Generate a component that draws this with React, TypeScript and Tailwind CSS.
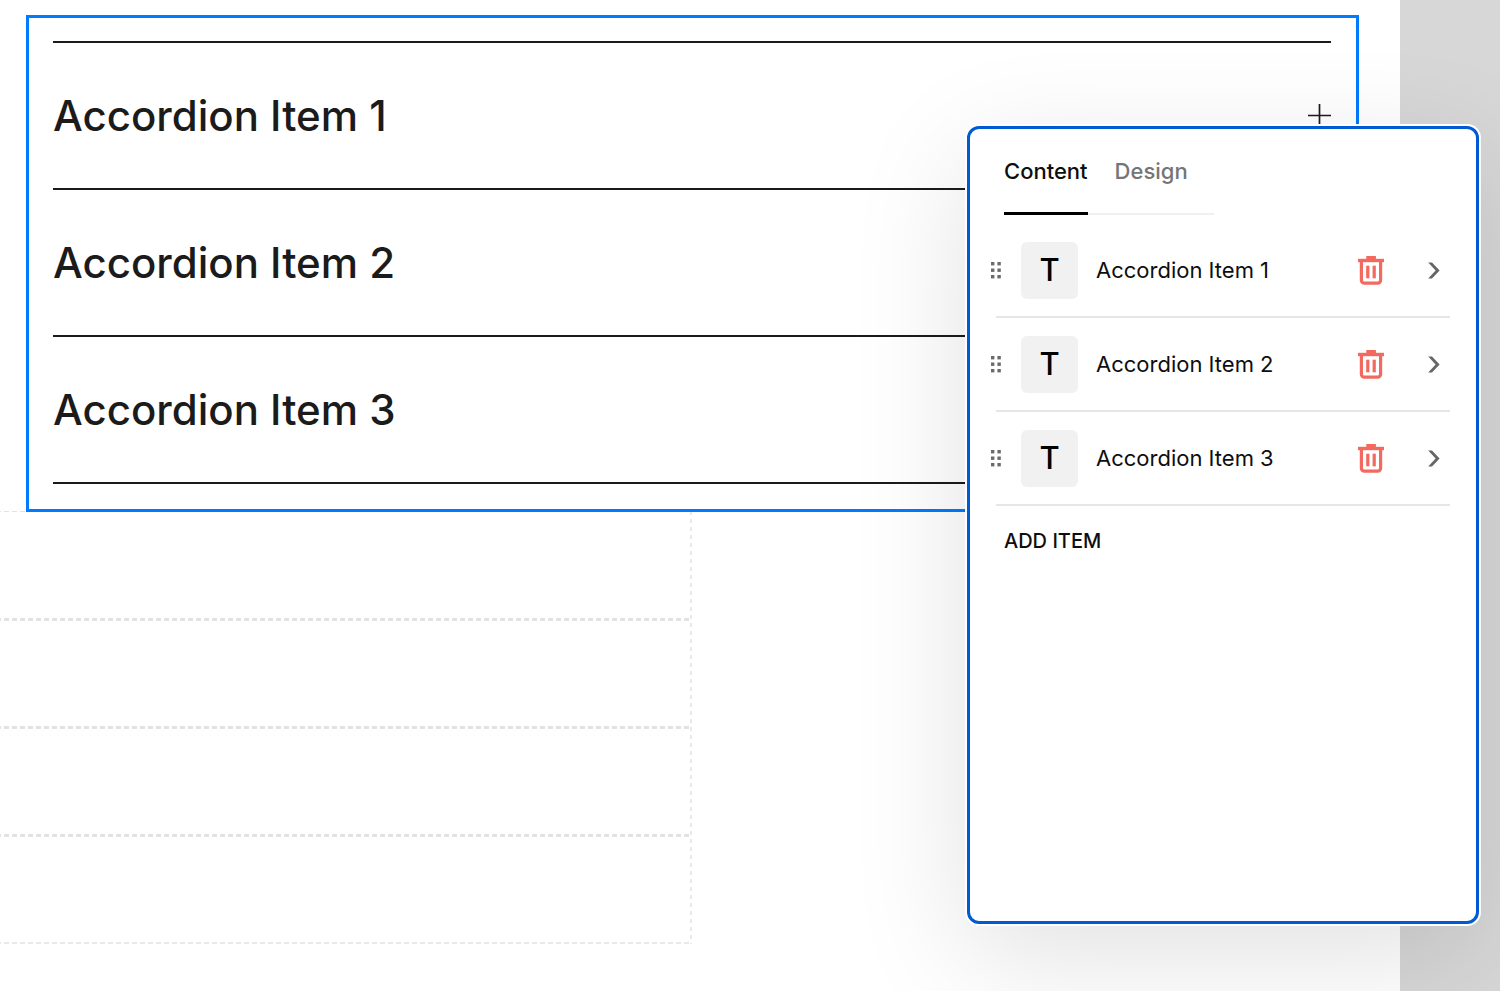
import { useState } from "react";

interface AccordionEntry {
  id: number;
  title: string;
}

const ITEMS: AccordionEntry[] = [
  { id: 1, title: "Accordion Item 1" },
  { id: 2, title: "Accordion Item 2" },
  { id: 3, title: "Accordion Item 3" },
];

const TABS = ["Content", "Design"];

function PlusIcon() {
  return (
    <svg width="23" height="23" viewBox="0 0 23 23" stroke="currentColor" strokeWidth="1.7" aria-hidden="true">
      <path d="M11.5 0v23M0 11.5h23" />
    </svg>
  );
}

function DragIcon() {
  return (
    <svg width="11" height="17" viewBox="0 0 11 17" fill="#6b6b6b" aria-hidden="true">
      {[0, 6.5, 13].map((y) => (
        <g key={y}>
          <rect x="0" y={y} width="3.4" height="3.4" />
          <rect x="6.4" y={y} width="3.4" height="3.4" />
        </g>
      ))}
    </svg>
  );
}

function TrashIcon() {
  return (
    <svg width="26" height="29" viewBox="0 0 26 29" fill="#f2695f" aria-hidden="true">
      <rect x="8.3" y="0" width="9.6" height="3.4" />
      <rect x="0" y="2.8" width="26" height="3.4" />
      <path
        d="M3.4 5v19.2a3 3 0 0 0 3 3h13.2a3 3 0 0 0 3-3V5"
        fill="none"
        stroke="#f2695f"
        strokeWidth="3.2"
      />
      <rect x="8.2" y="9.7" width="3.2" height="12.6" />
      <rect x="14.6" y="9.7" width="3.2" height="12.6" />
    </svg>
  );
}

function ChevronIcon() {
  return (
    <svg width="12" height="17" viewBox="0 0 12 17" fill="#666" aria-hidden="true">
      <path d="M0.2 0.4h3.8l7.6 8.1-7.6 8.1H0.2l7.4-8.1z" />
    </svg>
  );
}

function AccordionBlock() {
  return (
    <section className="relative z-10 mt-[15px] mr-[41px] ml-[26px] border-3 border-[#007aff] pt-[23px] pr-[25px] pb-[25px] pl-6">
      <ul className="border-t-2 border-[#1b1b1b]">
        {ITEMS.map((item) => (
          <li key={item.id} className="border-b-2 border-[#1b1b1b]">
            <button className="flex h-[145px] w-full items-center justify-between text-left text-[#1b1b1b]">
              <span className="text-[42px] font-medium">{item.title}</span>
              <PlusIcon />
            </button>
          </li>
        ))}
      </ul>
    </section>
  );
}

// Drop zones of the page grid below the selected block
function GridGuides() {
  return (
    <div className="-mt-px flex w-[692px]">
      <div className="flex-1">
        <div className="h-px bg-[repeating-linear-gradient(to_right,#e2e2e2_0_1px,transparent_1px_4px,#e2e2e2_4px_8px)]" />
        <div className="h-[106px]" />
        {[1, 2, 3].map((row) => (
          <div key={row}>
            <div className="h-[3px] bg-[repeating-linear-gradient(to_right,#e2e2e2_0_1px,transparent_1px_4px,#e2e2e2_4px_8px)]" />
            <div className="h-[105px]" />
          </div>
        ))}
        <div className="h-[2px] bg-[repeating-linear-gradient(to_right,#e8e8e8_0_1px,transparent_1px_4px,#e8e8e8_4px_8px)]" />
      </div>
      <div className="w-[2px] bg-[repeating-linear-gradient(to_bottom,#e8e8e8_0_4px,transparent_4px_8px)]" />
    </div>
  );
}

function EditorPanel() {
  const [tab, setTab] = useState("Content");

  return (
    <div className="absolute top-[126px] right-[21px] z-20 min-h-[798px] w-[512px] rounded-xl border-3 border-[#005bd3] bg-white pr-[26px] pl-[21px] shadow-[0_0_0_2px_#fff,0_32px_120px_rgba(0,0,0,0.12)]">
      <div role="tablist" className="ml-[13px] flex h-[86px] w-[210px] items-end gap-[27px] border-b-2 border-[#f0f0f0]">
        {TABS.map((name) => (
          <button
            key={name}
            role="tab"
            aria-selected={tab === name}
            onClick={() => setTab(name)}
            className={`-mb-[2px] h-[72px] border-b-3 pb-3 text-[22px] font-medium ${
              tab === name ? "border-black text-[#0e0e0e]" : "border-transparent text-[#757575]"
            }`}
          >
            {name}
          </button>
        ))}
      </div>

      <ul className="mt-[9px]">
        {ITEMS.map((item) => (
          <li key={item.id}>
            <div className="flex h-[92px] items-center pr-[10px]">
              <button aria-label={`Move ${item.title}`} className="cursor-grab">
                <DragIcon />
              </button>
              <span className="ml-[19px] flex size-[57px] items-center justify-center rounded-md bg-[#f1f1f1] text-[31px] font-medium text-black">
                T
              </span>
              <span className="ml-[18px] flex-1 text-[22px] text-[#0e0e0e]">{item.title}</span>
              <button aria-label={`Delete ${item.title}`}>
                <TrashIcon />
              </button>
              <button aria-label={`Edit ${item.title}`} className="ml-11">
                <ChevronIcon />
              </button>
            </div>
            <div className="ml-[5px] h-[2px] bg-[#e6e6e6]" />
          </li>
        ))}
      </ul>

      <button className="mt-5 ml-[13px] text-[20px] font-medium text-[#0e0e0e]">ADD ITEM</button>
    </div>
  );
}

export default function App() {
  return (
    <div className="relative flex min-h-screen overflow-hidden bg-white font-['Inter',sans-serif]">
      <main className="min-w-0 flex-1">
        <AccordionBlock />
        <GridGuides />
      </main>
      <aside className="w-[100px] shrink-0 bg-[#d7d7d7]" />
      <EditorPanel />
    </div>
  );
}
